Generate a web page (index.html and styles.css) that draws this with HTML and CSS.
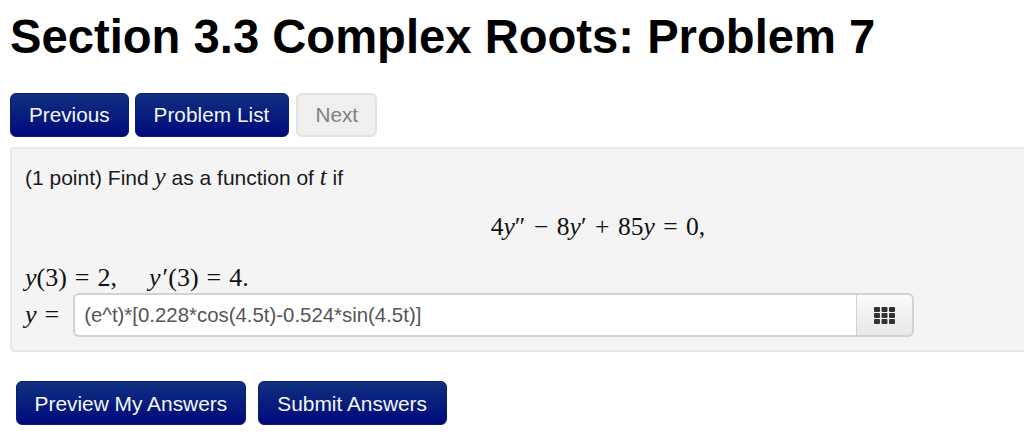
FILE: index.html
```html
<!DOCTYPE html>
<html lang="en">
<head>
<meta charset="utf-8">
<title>Section 3.3 Complex Roots: Problem 7</title>
<link rel="stylesheet" href="styles.css">
</head>
<body>
<h1 class="title">Section 3.3 Complex Roots: Problem 7</h1>
<nav class="nav">
  <a class="btn btn-tight">Previous</a>
  <a class="btn btn-wide">Problem List</a>
  <a class="btn disabled">Next</a>
</nav>
<form class="form">
  <div class="well">
    <p class="line"><span>(1 point) Find</span> <i class="m">y</i> <span>as a function of</span> <i class="m">t</i> <span>if</span></p>
    <div class="display m-up"><span>4<i>y</i>&Prime;</span><span class="op">&minus;</span><span>8<i>y</i>&prime;</span><span class="op">+</span><span>85<i>y</i></span><span class="op">=</span><span>0,</span></div>
    <div class="conds m-up"><span><i>y</i>(3) = 2,</span><span><i class="primed">y</i>&prime;(3) = 4.</span></div>
    <div class="answer">
      <span class="m-up ans-label"><i>y</i> =</span>
      <div class="group">
        <input class="field" type="text" value="(e^t)*[0.228*cos(4.5t)-0.524*sin(4.5t)]">
        <button class="addon" type="button" aria-label="Equation editor">
          <svg width="21" height="17" viewBox="0 0 21 17"><g fill="#333"><rect x="0" y="0" width="6" height="5" rx="1"/><rect x="7.5" y="0" width="6" height="5" rx="1"/><rect x="15" y="0" width="6" height="5" rx="1"/><rect x="0" y="6" width="6" height="5" rx="1"/><rect x="7.5" y="6" width="6" height="5" rx="1"/><rect x="15" y="6" width="6" height="5" rx="1"/><rect x="0" y="12" width="6" height="5" rx="1"/><rect x="7.5" y="12" width="6" height="5" rx="1"/><rect x="15" y="12" width="6" height="5" rx="1"/></g></svg>
        </button>
      </div>
    </div>
  </div>
  <div class="actions">
    <a class="btn btn-preview">Preview My Answers</a>
    <a class="btn">Submit Answers</a>
  </div>
</form>
</body>
</html>
```
FILE: styles.css
```css
html, body {
  margin: 0;
  overflow: hidden;
  background: #fff;
}
body {
  width: 1024px;
  height: 447px;
  padding: 0 0 0 10px;
  box-sizing: border-box;
  font-family: "Liberation Sans", Arial, sans-serif;
  color: #1a1a1a;
}
.title {
  margin: 0;
  padding-top: 9px;
  font-size: 47.2px;
  line-height: 56px;
  font-weight: 700;
  color: #000;
}
.nav {
  display: flex;
  gap: 6px;
  margin-top: 28px;
}
.btn {
  display: block;
  height: 44px;
  box-sizing: border-box;
  padding: 0 18.5px;
  font-size: 20.7px;
  line-height: 42px;
  color: #f4f6fb;
  border: 1px solid #0a1f6e;
  border-radius: 6px;
  background: linear-gradient(#10317f, #00097c);
  white-space: nowrap;
}
.btn.btn-tight {
  padding: 0 18px;
}
.btn.btn-wide {
  padding: 0 18.5px 0 18px;
  letter-spacing: 0.08px;
}
.btn.disabled {
  color: #808080;
  background: #efefef;
  border: 2px solid #e2e2e2;
  line-height: 40px;
  margin-left: 1px;
  padding: 0 17.5px;
}
.well {
  width: 1190px;
  height: 205px;
  box-sizing: border-box;
  margin-top: 10px;
  padding: 14px 13px 0 13px;
  background: #f4f4f4;
  border: 2px solid #e8e8e8;
  border-radius: 4px;
  font-size: 21px;
}
.line {
  margin: 0;
  line-height: 28px;
}
.m, .m-up {
  font-family: "Liberation Serif", "Times New Roman", serif;
}
.m {
  font-size: 25px;
}
.display {
  display: flex;
  justify-content: center;
  gap: 8.5px;
  margin-top: 20px;
  padding-right: 14px;
  font-size: 25.5px;
  line-height: 30px;
  color: #111;
}
.conds {
  display: flex;
  gap: 32px;
  margin-top: 21px;
  font-size: 26px;
  line-height: 29px;
  word-spacing: 1.5px;
  color: #111;
}
.primed {
  margin-right: 2px;
}
.answer {
  display: flex;
  align-items: center;
  gap: 14px;
  margin-top: 1px;
}
.ans-label {
  font-size: 26px;
  word-spacing: 1.5px;
  color: #111;
}
.group {
  display: flex;
  width: 841px;
  height: 44px;
}
.field {
  flex: 1;
  min-width: 0;
  box-sizing: border-box;
  padding: 0 9px;
  font: 20.4px "Liberation Sans", Arial, sans-serif;
  color: #555;
  background: #fff;
  border: 2px solid #d2d2d2;
  border-right: 0;
  border-radius: 6px 0 0 6px;
  outline: none;
}
.addon {
  display: flex;
  align-items: center;
  justify-content: center;
  width: 58px;
  padding: 0;
  background: linear-gradient(#fafafa, #e8e8e8);
  border: 2px solid #d2d2d2;
  border-left: 1px solid #d2d2d2;
  border-radius: 0 6px 6px 0;
}
.actions {
  display: flex;
  gap: 12px;
  margin-top: 29px;
  margin-left: 6px;
}
.actions .btn {
  font-size: 20.9px;
  line-height: 43px;
  padding: 0 18.5px;
}
.actions .btn.btn-preview {
  padding: 0 17.5px;
}
```
